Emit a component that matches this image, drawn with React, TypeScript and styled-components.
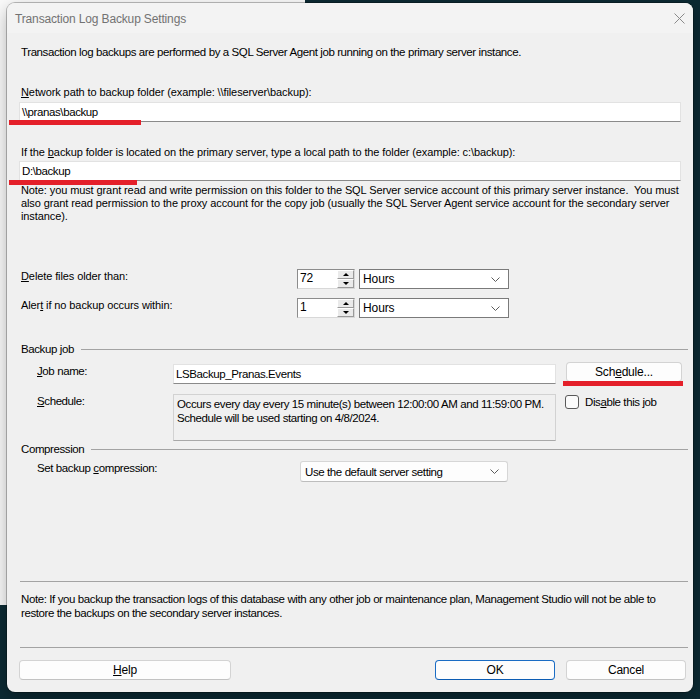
import React from 'react'
import styled, { createGlobalStyle, css } from 'styled-components'

const GlobalStyle = createGlobalStyle`
  html, body {
    margin: 0;
    padding: 0;
  }
  body {
    width: 700px;
    height: 699px;
    overflow: hidden;
    background: #0c2a33;
    font-family: 'Liberation Sans', Arial, sans-serif;
    color: #000;
  }
  * {
    box-sizing: border-box;
  }
`

// two text looks of the dialog: the old WinForms font and the newer UI font
const classic = css`
  font-size: 11px;
  letter-spacing: -0.1px;
  line-height: 13px;
`

const ui = css`
  font-size: 11.5px;
  letter-spacing: -0.4px;
  line-height: 14px;
`

const Desktop = styled.div`
  position: relative;
  width: 700px;
  height: 699px;
  padding: 3px 0 0 7px;
`

const BehindWindow = styled.div`
  position: absolute;
  left: 0;
  top: 0;
  width: 305px;
  height: 605px;
  background: #fafafa;
`

const Dialog = styled.div`
  position: relative;
  width: 686px;
  height: 689px;
  display: flex;
  flex-direction: column;
  background: #f0f0f0;
  border-radius: 8px;
  overflow: hidden;
  box-shadow: 0 0 0 1px rgba(0, 0, 0, 0.25), 0 6px 18px rgba(0, 0, 0, 0.3);
`

const TitleBar = styled.div`
  height: 30px;
  display: flex;
  align-items: center;
  justify-content: space-between;
  background: #f3f3f3;
`

const Title = styled.span`
  padding-left: 8px;
  padding-top: 1px;
  font-size: 12px;
  letter-spacing: -0.15px;
  color: #727272;
`

const CloseBox = styled.div`
  width: 28px;
  height: 30px;
  display: flex;
  align-items: center;
  justify-content: center;
`

const Body = styled.div`
  flex: 1;
  display: flex;
  flex-direction: column;
  padding: 0 5px 12px 12px;
`

const Text = styled.div<{ $ui?: boolean; $top: number }>`
  ${p => (p.$ui ? ui : classic)}
  margin-top: ${p => p.$top}px;
  padding-left: 2px;
  white-space: pre;
`

const Key = styled.span`
  text-decoration: underline;
`

const Field = styled.div<{ $top: number }>`
  position: relative;
  margin-top: ${p => p.$top}px;
  margin-right: 7px;
`

const TextBox = styled.div<{ $width?: number }>`
  ${ui}
  height: 20px;
  width: ${p => (p.$width ? `${p.$width}px` : 'auto')};
  padding: 2px 2px 0;
  background: #fff;
  border: 1px solid #e2e2e2;
  border-bottom-color: #8a8a8a;
  white-space: nowrap;
`

const RedMark = styled.div<{ $left: number; $top: number; $width: number }>`
  position: absolute;
  left: ${p => p.$left}px;
  top: ${p => p.$top}px;
  width: ${p => p.$width}px;
  height: 5px;
  background: #e4202a;
`

const Row = styled.div<{ $top: number; $indent?: number }>`
  display: flex;
  align-items: flex-start;
  margin-top: ${p => p.$top}px;
  padding-left: ${p => p.$indent || 0}px;
`

const RowLabel = styled.div<{ $width: number; $ui?: boolean }>`
  ${p => (p.$ui ? ui : classic)}
  width: ${p => p.$width}px;
  padding-left: ${p => (p.$ui ? 0 : 2)}px;
  padding-top: ${p => (p.$ui ? 0 : 1)}px;
  flex-shrink: 0;
  white-space: nowrap;
`

const Spinner = styled.div`
  width: 58px;
  height: 20px;
  display: flex;
  background: #fff;
  border: 1px solid #8c8c8c;
  border-right-color: #d8d8d8;
  border-bottom-color: #d8d8d8;
`

const SpinValue = styled.div`
  ${classic}
  font-size: 12px;
  flex: 1;
  padding: 2px 0 0 2px;
`

const SpinButtons = styled.div`
  width: 17px;
  display: flex;
  flex-direction: column;
`

const SpinButton = styled.div<{ $down?: boolean }>`
  flex: 1;
  display: flex;
  align-items: center;
  justify-content: center;
  background: #eaeaea;
  border: 1px solid #fff;
  border-right-color: #9a9a9a;
  border-bottom-color: #9a9a9a;
  &::before {
    content: '';
    border-left: 3px solid transparent;
    border-right: 3px solid transparent;
    ${p => (p.$down ? 'border-top: 3px solid #000;' : 'border-bottom: 3px solid #000;')}
  }
`

const ClassicSelect = styled.div`
  ${classic}
  font-size: 12px;
  width: 150px;
  height: 20px;
  margin-left: 4px;
  display: flex;
  align-items: center;
  justify-content: space-between;
  padding: 0 8px 0 3px;
  background: #fff;
  border: 1px solid #7a7a7a;
`

const ModernSelect = styled.div`
  ${ui}
  width: 208px;
  height: 21px;
  display: flex;
  align-items: center;
  justify-content: space-between;
  padding: 0 8px 0 4px;
  background: #fdfdfd;
  border: 1px solid #d6d6d6;
  border-bottom-color: #bdbdbd;
  border-radius: 3px;
`

const GroupHeader = styled.div<{ $top: number }>`
  ${ui}
  display: flex;
  align-items: center;
  gap: 7px;
  margin-top: ${p => p.$top}px;
  padding-left: 2px;
  &::after {
    content: '';
    flex: 1;
    border-top: 1px solid #a3a3a3;
  }
`

const ReadOnlyBox = styled.div`
  ${ui}
  width: 383px;
  height: 47px;
  padding: 2px 3px;
  background: #f0f0f0;
  border: 1px solid #d2d2d2;
  border-bottom-color: #a8a8a8;
  white-space: pre;
`

const Button = styled.div<{ $width: number; $primary?: boolean }>`
  ${ui}
  font-size: 12px;
  letter-spacing: -0.2px;
  width: ${p => p.$width}px;
  height: 20px;
  display: flex;
  align-items: center;
  justify-content: center;
  background: #fdfdfd;
  border: 1px solid ${p => (p.$primary ? '#1a6cc4' : '#d3d3d3')};
  border-bottom-color: ${p => (p.$primary ? '#0b5cb3' : '#c2c2c2')};
  border-radius: 4px;
  flex-shrink: 0;
`

const ButtonWrap = styled.div`
  position: relative;
  margin-left: 10px;
  margin-top: -2px;
`

const CheckLine = styled.div`
  ${ui}
  display: flex;
  align-items: center;
  gap: 6px;
  margin-left: 9px;
  margin-top: 1px;
`

const CheckBox = styled.div`
  width: 14px;
  height: 14px;
  border: 1px solid #5a5a5a;
  border-radius: 3px;
  background: #fbfbfb;
`

const Spacer = styled.div`
  flex: 1;
`

const Separator = styled.div<{ $top?: number }>`
  margin-top: ${p => p.$top || 0}px;
  margin-left: 1px;
  border-top: 1px solid #a3a3a3;
`

const ButtonRow = styled.div`
  display: flex;
  align-items: center;
  margin-top: 12px;
  padding-right: 2px;
  gap: 11px;
`

const Chevron = () => (
  <svg width="9" height="5" viewBox="0 0 9 5">
    <path d="M0.5 0.5 L4.5 4.5 L8.5 0.5" fill="none" stroke="#5c5c5c" strokeWidth="1" />
  </svg>
)

const CloseIcon = () => (
  <svg width="11" height="11" viewBox="0 0 11 11">
    <path d="M0.5 0.5 L10.5 10.5 M10.5 0.5 L0.5 10.5" stroke="#8a8a8a" strokeWidth="1" />
  </svg>
)

const NumberSpinner = ({ value }: { value: string }) => (
  <Spinner>
    <SpinValue>{value}</SpinValue>
    <SpinButtons>
      <SpinButton />
      <SpinButton $down />
    </SpinButtons>
  </Spinner>
)

export default function App() {
  return (
    <Desktop>
      <GlobalStyle />
      <BehindWindow />
      <Dialog>
        <TitleBar>
          <Title>Transaction Log Backup Settings</Title>
          <CloseBox>
            <CloseIcon />
          </CloseBox>
        </TitleBar>

        <Body>
          <Text $ui $top={12}>
            Transaction log backups are performed by a SQL Server Agent job running on the primary server instance.
          </Text>

          <Text $top={27}>
            <Key>N</Key>etwork path to backup folder (example: \\fileserver\backup):
          </Text>
          <Field $top={3}>
            <TextBox>\\pranas\backup</TextBox>
            <RedMark $left={-10} $top={18} $width={132} />
          </Field>

          <Text $top={24}>
            If the <Key>b</Key>ackup folder is located on the primary server, type a local path to the folder (example: c:\backup):
          </Text>
          <Field $top={2}>
            <TextBox>D:\backup</TextBox>
            <RedMark $left={-10} $top={19} $width={128} />
          </Field>

          <Text $top={3}>
            {'Note: you must grant read and write permission on this folder to the SQL Server service account of this primary server instance.  You must\n'}
            {'also grant read permission to the proxy account for the copy job (usually the SQL Server Agent service account for the secondary server\n'}
            {'instance).'}
          </Text>

          <Row $top={46}>
            <RowLabel $width={278}>
              <Key>D</Key>elete files older than:
            </RowLabel>
            <NumberSpinner value="72" />
            <ClassicSelect>
              Hours
              <Chevron />
            </ClassicSelect>
          </Row>
          <Row $top={9}>
            <RowLabel $width={278}>
              Aler<Key>t</Key> if no backup occurs within:
            </RowLabel>
            <NumberSpinner value="1" />
            <ClassicSelect>
              Hours
              <Chevron />
            </ClassicSelect>
          </Row>

          <GroupHeader $top={24}>Backup job</GroupHeader>
          <Row $top={8} $indent={18}>
            <RowLabel $ui $width={136}>
              <Key>J</Key>ob name:
            </RowLabel>
            <TextBox $width={383}>LSBackup_Pranas.Events</TextBox>
            <ButtonWrap>
              <Button $width={116}>
                Sch<Key>e</Key>dule...
              </Button>
              <RedMark $left={-3} $top={19} $width={120} />
            </ButtonWrap>
          </Row>
          <Row $top={10} $indent={18}>
            <RowLabel $ui $width={136}>
              <Key>S</Key>chedule:
            </RowLabel>
            <ReadOnlyBox>
              {'Occurs every day every 15 minute(s) between 12:00:00 AM and 11:59:00 PM.\n'}
              {'Schedule will be used starting on 4/8/2024.'}
            </ReadOnlyBox>
            <CheckLine>
              <CheckBox />
              <span>
                Dis<Key>a</Key>ble this job
              </span>
            </CheckLine>
          </Row>

          <GroupHeader $top={1}>Compression</GroupHeader>
          <Row $top={5} $indent={18}>
            <RowLabel $ui $width={263}>
              Set backup <Key>c</Key>ompression:
            </RowLabel>
            <ModernSelect>
              Use the default server setting
              <Chevron />
            </ModernSelect>
          </Row>

          <Spacer />
          <Separator />
          <Text $ui $top={10}>
            {'Note: If you backup the transaction logs of this database with any other job or maintenance plan, Management Studio will not be able to\n'}
            {'restore the backups on the secondary server instances.'}
          </Text>
          <Separator $top={27} />

          <ButtonRow>
            <Button $width={212}>
              <Key>H</Key>elp
            </Button>
            <Spacer />
            <Button $width={120} $primary>
              OK
            </Button>
            <Button $width={120}>Cancel</Button>
          </ButtonRow>
        </Body>
      </Dialog>
    </Desktop>
  )
}
